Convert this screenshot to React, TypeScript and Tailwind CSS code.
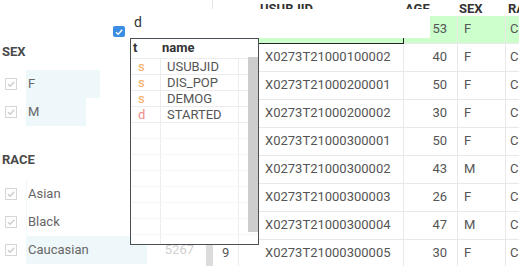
import React from "react";

type Facet = { label: string; count: number; bar: number };

const sexFacets: Facet[] = [
  { label: "F", count: 3069, bar: 74 },
  { label: "M", count: 2458, bar: 60 },
];

const raceFacets: Facet[] = [
  { label: "Asian", count: 21, bar: 1 },
  { label: "Black", count: 32, bar: 1 },
  { label: "Caucasian", count: 5267, bar: 121 },
];

const subjects = [
  { id: "X0273T21000100001", age: 53, sex: "F", race: "Caucasian" },
  { id: "X0273T21000100002", age: 40, sex: "F", race: "Caucasian" },
  { id: "X0273T21000200001", age: 50, sex: "F", race: "Caucasian" },
  { id: "X0273T21000200002", age: 30, sex: "F", race: "Caucasian" },
  { id: "X0273T21000300001", age: 50, sex: "F", race: "Caucasian" },
  { id: "X0273T21000300002", age: 43, sex: "M", race: "Caucasian" },
  { id: "X0273T21000300003", age: 26, sex: "F", race: "Caucasian" },
  { id: "X0273T21000300004", age: 47, sex: "M", race: "Caucasian" },
  { id: "X0273T21000300005", age: 30, sex: "F", race: "Caucasian" },
];

const columns = [
  { type: "s", name: "USUBJID" },
  { type: "s", name: "DIS_POP" },
  { type: "s", name: "DEMOG" },
  { type: "d", name: "STARTED" },
];

const Check: React.FC<{ color: string }> = ({ color }) => (
  <svg width="10" height="10" viewBox="0 0 10 10">
    <path d="M2 5.2 L4.2 7.3 L8.2 2.8" fill="none" stroke={color} strokeWidth="1.4" />
  </svg>
);

const FacetRow: React.FC<{ facet: Facet }> = ({ facet }) => (
  <div className="h-[28px] flex items-center">
    <div className="ml-[5px] w-[12px] h-[12px] border border-[#d6d6d6] bg-white flex items-center justify-center">
      <Check color="#cdcdcd" />
    </div>
    <div className="ml-[9px] relative flex-1 h-full flex items-center">
      {/* bar behind the label, width from data */}
      <div className="absolute left-0 top-0 h-full bg-[#eef7fa]" style={{ width: facet.bar }} />
      <span className="relative pl-[2px] text-[#666]">{facet.label}</span>
      <span className="relative ml-auto pr-[11px] text-[#d0d0d0]">{facet.count}</span>
    </div>
  </div>
);

export default function App() {
  return (
    <div className="relative w-[519px] h-[266px] overflow-hidden bg-white flex text-[13px] font-['Roboto','Liberation_Sans',sans-serif]">
      {/* Filter panel */}
      <div className="w-[205px] shrink-0 pt-[44px]">
        <div className="pl-[2px] leading-[16px] font-bold text-[#4a4a4a] mb-[10px]">SEX</div>
        {sexFacets.map((f) => (
          <FacetRow key={f.label} facet={f} />
        ))}
        <div className="pl-[2px] leading-[16px] font-bold text-[#4a4a4a] mt-[26px] mb-[12px]">RACE</div>
        {raceFacets.map((f) => (
          <FacetRow key={f.label} facet={f} />
        ))}
      </div>

      {/* Grid */}
      <div className="flex-1 flex flex-col">
        <div className="h-[16px] flex shrink-0 font-bold text-[#333] leading-[17px]">
          <div className="w-[8px] border-r border-[#e4e4e4]" />
          <div className="w-[45px]" />
          <div className="w-[146px] pl-[2px]">USUBJID</div>
          <div className="w-[54px] pl-[1px]">AGE</div>
          <div className="w-[48px] pl-[1px]">SEX</div>
          <div className="flex-1 pl-[2px] whitespace-nowrap">RACE</div>
        </div>
        {subjects.map((s, i) => {
          const current = i === 0;
          return (
            <div key={s.id} className="h-[28px] shrink-0 flex leading-[26px] text-[#555]">
              <div className="w-[53px] flex">
                <div className="w-[1px]" />
                <div className="w-[7px] bg-[#dcdcdc]" />
                <div className="w-[26px] pl-[9px] border-r border-[#ececec]">{i + 1}</div>
                <div className="w-[19px]" />
              </div>
              <div
                className={
                  current
                    ? "w-[146px] pl-[7px] bg-[#ccffcc] border-b border-r border-[#222]"
                    : "w-[146px] pl-[7px] border-b border-r border-[#e8e8e8]"
                }
              >
                {s.id}
              </div>
              <div
                className={
                  current
                    ? "w-[54px] pr-[10px] text-right bg-[#ccffcc] border-b border-r border-[#e8e8e8]"
                    : "w-[54px] pr-[10px] text-right border-b border-r border-[#e8e8e8]"
                }
              >
                {s.age}
              </div>
              <div
                className={
                  current
                    ? "w-[48px] pl-[6px] bg-[#ccffcc] border-b border-r border-[#e8e8e8]"
                    : "w-[48px] pl-[6px] border-b border-r border-[#e8e8e8]"
                }
              >
                {s.sex}
              </div>
              <div
                className={
                  current
                    ? "flex-1 pl-[4px] whitespace-nowrap overflow-hidden bg-[#ccffcc] border-b border-[#e8e8e8]"
                    : "flex-1 pl-[4px] whitespace-nowrap overflow-hidden border-b border-[#e8e8e8]"
                }
              >
                {s.race}
              </div>
            </div>
          );
        })}
      </div>

      {/* Cell editor */}
      <div className="absolute left-[105px] top-[9px] w-[325px] h-[29px] bg-white flex items-start">
        <div className="ml-[8px] mt-[17px] w-[12px] h-[11px] rounded-[2px] bg-[#3b8de4] flex items-center justify-center">
          <Check color="#ffffff" />
        </div>
        <div className="ml-[9px] mt-[4px] text-[14px] text-[#333] leading-[18px]">d</div>
      </div>

      {/* Column picker dropdown */}
      <div className="absolute left-[130px] top-[38px] w-[129px] h-[207px] border border-[#4b5057] bg-white overflow-hidden">
        <div className="h-[20px] flex font-bold text-[#333] leading-[18px] border-b border-[#ececec]">
          <div className="w-[30px] pl-[2px]">t</div>
          <div className="pl-[1px]">name</div>
        </div>
        {Array.from({ length: 12 }).map((_, i) => {
          const c = columns[i];
          return (
            <div
              key={i}
              className={
                c
                  ? "h-[16px] flex leading-[15px] border-b border-[#ececec]"
                  : "h-[16px] flex leading-[15px] border-b border-[#f6f6f6]"
              }
            >
              <div
                className={
                  c && c.type === "d"
                    ? "w-[30px] pl-[7px] border-r border-[#ececec] text-[#f08a8a]"
                    : "w-[30px] pl-[7px] border-r border-[#ececec] text-[#f5a95e]"
                }
              >
                {c ? c.type : ""}
              </div>
              <div className="w-[78px] pl-[6px] border-r border-[#ececec] text-[#555]">{c ? c.name : ""}</div>
            </div>
          );
        })}
        <div className="absolute right-0 top-[18px] w-[10px] h-[175px] bg-[#cdcdcd]" />
      </div>
    </div>
  );
}
